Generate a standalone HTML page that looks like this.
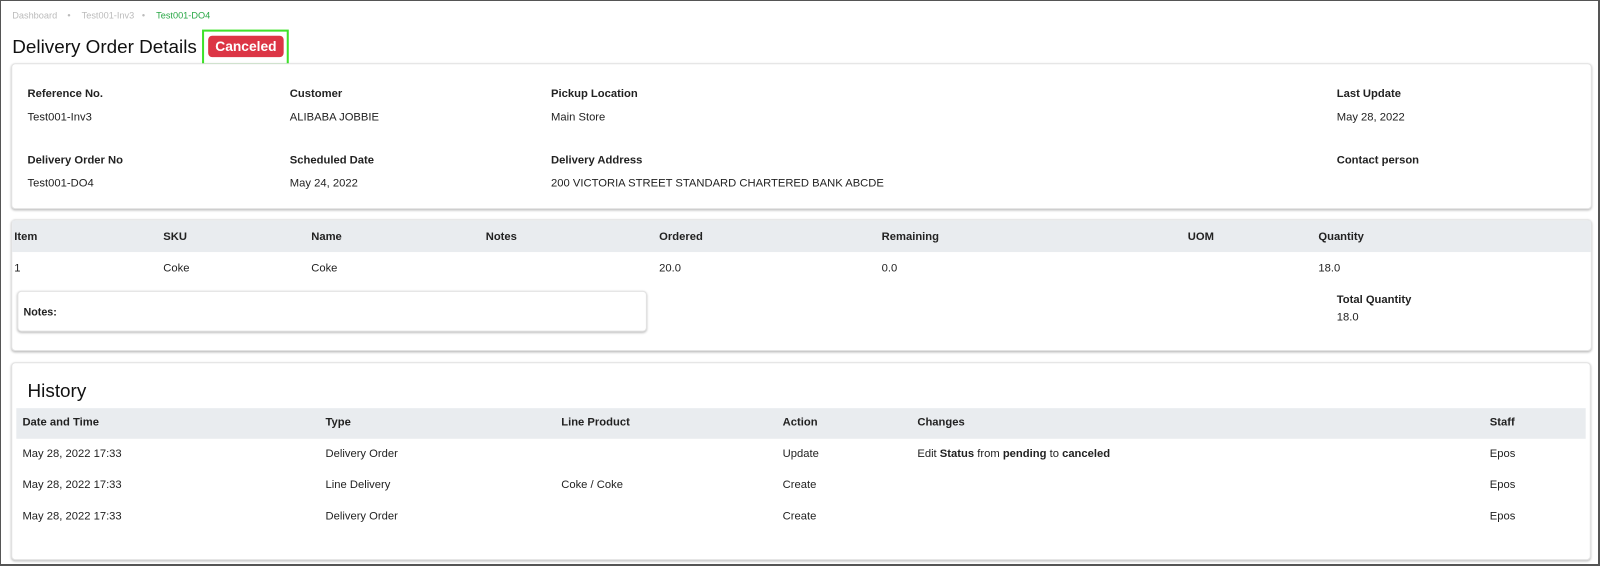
<!DOCTYPE html>
<html><head><meta charset="utf-8"><style>
*{margin:0;padding:0;box-sizing:border-box}
body{width:1600px;height:566px;background:#fff;font-family:"Liberation Sans",sans-serif;font-size:11px;color:#222;position:relative;overflow:hidden}
.frame{position:absolute;left:0;top:0;width:1600px;height:566px;border:1px solid #555;border-right:2px solid #555;border-bottom:2px solid #555;z-index:5}
.wrap{position:absolute;left:0;top:0;width:1568px;height:555px;transform:scale(1.0204);transform-origin:0 0}
.a{position:absolute;white-space:nowrap}
.b{font-weight:bold}
.card{position:absolute;background:#fff;border:1px solid #e3e3e3;border-radius:4px;box-shadow:0 1px 2px rgba(0,0,0,.25)}
.hdr{position:absolute;background:#e9ecef}
</style></head><body>
<div class="frame"></div>
<div class="wrap">
<div class="a" style="left:12px;top:10px;font-size:9px;color:#bbb">Dashboard</div>
<div class="a" style="left:66px;top:10px;font-size:9px;color:#bbb">•</div>
<div class="a" style="left:80px;top:10px;font-size:9px;color:#bbb">Test001-Inv3</div>
<div class="a" style="left:139px;top:10px;font-size:9px;color:#bbb">•</div>
<div class="a" style="left:153px;top:10px;font-size:9px;color:#28a745">Test001-DO4</div>
<div class="a" style="left:12px;top:35px;font-size:18.5px;color:#111">Delivery Order Details</div>
<div class="a" style="left:198px;top:29px;width:85px;height:35px;border:2px solid #3ee22a"></div>
<div class="a b" style="left:204px;top:35px;width:74px;height:21px;background:#dc3545;color:#fff;border-radius:4px;font-size:13.5px;text-align:center;line-height:21px">Canceled</div>

<div class="card" style="left:11px;top:62px;width:1549px;height:143px"></div>
<div class="a b" style="left:27px;top:86px">Reference No.</div>
<div class="a" style="left:27px;top:109px">Test001-Inv3</div>
<div class="a b" style="left:284px;top:86px">Customer</div>
<div class="a" style="left:284px;top:109px">ALIBABA JOBBIE</div>
<div class="a b" style="left:540px;top:86px">Pickup Location</div>
<div class="a" style="left:540px;top:109px">Main Store</div>
<div class="a b" style="left:1310px;top:86px">Last Update</div>
<div class="a" style="left:1310px;top:109px">May 28, 2022</div>
<div class="a b" style="left:27px;top:151px">Delivery Order No</div>
<div class="a" style="left:27px;top:174px">Test001-DO4</div>
<div class="a b" style="left:284px;top:151px">Scheduled Date</div>
<div class="a" style="left:284px;top:174px">May 24, 2022</div>
<div class="a b" style="left:540px;top:151px">Delivery Address</div>
<div class="a" style="left:540px;top:174px">200 VICTORIA STREET STANDARD CHARTERED BANK ABCDE</div>
<div class="a b" style="left:1310px;top:151px">Contact person</div>

<div class="card" style="left:11px;top:215px;width:1549px;height:129px"></div>
<div class="hdr" style="left:12px;top:216px;width:1547px;height:31px"></div>
<div class="a b" style="left:14px;top:226px">Item</div>
<div class="a b" style="left:160px;top:226px">SKU</div>
<div class="a b" style="left:305px;top:226px">Name</div>
<div class="a b" style="left:476px;top:226px">Notes</div>
<div class="a b" style="left:646px;top:226px">Ordered</div>
<div class="a b" style="left:864px;top:226px">Remaining</div>
<div class="a b" style="left:1164px;top:226px">UOM</div>
<div class="a b" style="left:1292px;top:226px">Quantity</div>
<div class="a" style="left:14px;top:257px">1</div>
<div class="a" style="left:160px;top:257px">Coke</div>
<div class="a" style="left:305px;top:257px">Coke</div>
<div class="a" style="left:646px;top:257px">20.0</div>
<div class="a" style="left:864px;top:257px">0.0</div>
<div class="a" style="left:1292px;top:257px">18.0</div>
<div class="card" style="left:17px;top:285px;width:617px;height:40px"></div>
<div class="a b" style="left:23px;top:300px;font-size:10.5px">Notes:</div>
<div class="a b" style="left:1310px;top:288px">Total Quantity</div>
<div class="a" style="left:1310px;top:305px">18.0</div>

<div class="card" style="left:11px;top:355px;width:1548px;height:194px"></div>
<div class="a" style="left:27px;top:372px;font-size:18.5px;color:#111">History</div>
<div class="hdr" style="left:16px;top:400px;width:1538px;height:30px"></div>
<div class="a b" style="left:22px;top:408px">Date and Time</div>
<div class="a b" style="left:319px;top:408px">Type</div>
<div class="a b" style="left:550px;top:408px">Line Product</div>
<div class="a b" style="left:767px;top:408px">Action</div>
<div class="a b" style="left:899px;top:408px">Changes</div>
<div class="a b" style="left:1460px;top:408px">Staff</div>
<div class="a" style="left:22px;top:439px">May 28, 2022 17:33</div>
<div class="a" style="left:319px;top:439px">Delivery Order</div>
<div class="a" style="left:767px;top:439px">Update</div>
<div class="a" style="left:899px;top:439px">Edit <b>Status</b> from <b>pending</b> to <b>canceled</b></div>
<div class="a" style="left:1460px;top:439px">Epos</div>
<div class="a" style="left:22px;top:469px">May 28, 2022 17:33</div>
<div class="a" style="left:319px;top:469px">Line Delivery</div>
<div class="a" style="left:550px;top:469px">Coke / Coke</div>
<div class="a" style="left:767px;top:469px">Create</div>
<div class="a" style="left:1460px;top:469px">Epos</div>
<div class="a" style="left:22px;top:500px">May 28, 2022 17:33</div>
<div class="a" style="left:319px;top:500px">Delivery Order</div>
<div class="a" style="left:767px;top:500px">Create</div>
<div class="a" style="left:1460px;top:500px">Epos</div>
</div>
</body></html>
